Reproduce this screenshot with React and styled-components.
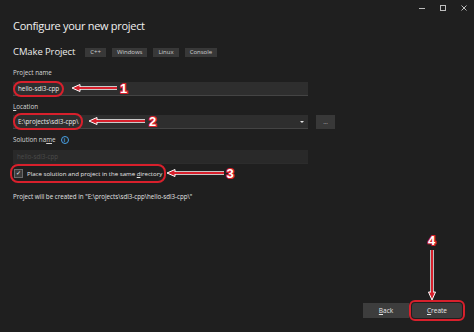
import React from 'react';
import styled, { createGlobalStyle } from 'styled-components';

const GlobalStyle = createGlobalStyle`
  html, body {
    margin: 0;
    padding: 0;
    background: #1f1f1f;
  }
  body {
    font-family: "Open Sans", "Noto Sans", sans-serif;
    color: #e6e6e6;
  }
`;

const red = '#d8202c';

export const StyledWindow = styled.div`
  position: relative;
  width: 474px;
  height: 332px;
  background: #1f1f1f;
  overflow: hidden;
  display: flex;
  flex-direction: column;
`;

export const StyledTitleBar = styled.div`
  height: 15px;
  display: flex;
  justify-content: flex-end;
  align-items: center;
`;

export const StyledControl = styled.div`
  width: 21px;
  height: 15px;
  display: flex;
  align-items: center;
  justify-content: center;
  color: #bdbdbd;
`;

export const StyledBody = styled.div`
  flex: 1;
  padding: 0 0 0 13px;
  display: flex;
  flex-direction: column;
`;

export const StyledTitle = styled.h1`
  margin: 3px 0 0;
  font-size: 11px;
  font-weight: 400;
  line-height: 16px;
  color: #f0f0f0;
  letter-spacing: -0.3px;
`;

export const StyledTypeRow = styled.div`
  margin-top: 11px;
  display: flex;
  align-items: center;
  gap: 6px;
`;

export const StyledTypeName = styled.span`
  font-size: 9.5px;
  line-height: 14px;
  margin-right: 4px;
  color: #ececec;
  letter-spacing: -0.1px;
`;

export const StyledTag = styled.span`
  background: #383838;
  color: #cfcfcf;
  font-size: 6px;
  line-height: 9px;
  padding: 0 5px;
`;

export const StyledLabel = styled.div`
  margin-top: ${(p) => p.$top}px;
  font-size: 6.3px;
  line-height: 10px;
  color: #d6d6d6;
  display: flex;
  align-items: center;
  gap: 5px;
`;

export const StyledFieldRow = styled.div`
  margin-top: ${(p) => p.$top}px;
  display: flex;
  align-items: center;
  gap: 8px;
`;

export const StyledInput = styled.div`
  width: 295px;
  height: 14px;
  box-sizing: border-box;
  background: ${(p) => (p.$disabled ? '#292929' : '#2e2e2e')};
  border-bottom: 1px solid ${(p) => (p.$disabled ? '#2c2c2c' : '#444')};
  display: flex;
  align-items: center;
  justify-content: space-between;
  padding-right: 4px;
  font-size: 6.3px;
  color: ${(p) => (p.$disabled ? '#4a4a4a' : '#e8e8e8')};
`;

export const StyledPlain = styled.span`
  padding-left: 4px;
`;

export const StyledHighlight = styled.span`
  display: inline-flex;
  align-items: center;
  gap: 4px;
  height: ${(p) => p.$height || 16}px;
  box-sizing: border-box;
  padding: 0 ${(p) => p.$pad || 3}px;
  margin-left: ${(p) => p.$shift || 0}px;
  border: 2px solid ${red};
  border-radius: 8px;
`;

export const StyledCaret = styled.span`
  width: 0;
  height: 0;
  border-left: 2px solid transparent;
  border-right: 2px solid transparent;
  border-top: 2px solid #e6e6e6;
`;

export const StyledBrowse = styled.div`
  width: 19px;
  height: 14px;
  background: #383838;
  display: flex;
  align-items: center;
  justify-content: center;
  color: #d8d8d8;
  font-size: 6px;
  line-height: 1;
`;

export const StyledInfo = styled.span`
  width: 6px;
  height: 6px;
  border: 1px solid #4aa3e8;
  border-radius: 50%;
  color: #4aa3e8;
  font-size: 5px;
  font-weight: 700;
  display: inline-flex;
  align-items: center;
  justify-content: center;
  line-height: 1;
`;

export const StyledCheckRow = styled.div`
  margin-top: 0;
  display: flex;
`;

export const StyledCheckbox = styled.span`
  width: 7px;
  height: 7px;
  background: #3b3b3b;
  border: 1px solid #6a6a6a;
  color: #f0f0f0;
  font-size: 6px;
  line-height: 7px;
  text-align: center;
`;

export const StyledCheckText = styled.span`
  font-size: 6.1px;
  color: #e8e8e8;
`;

export const StyledNote = styled.div`
  margin-top: 9px;
  font-size: 6.2px;
  line-height: 10px;
  color: #e2e2e2;
`;

export const StyledFooter = styled.div`
  margin-top: auto;
  padding: 0 12px 14px 0;
  display: flex;
  justify-content: flex-end;
  gap: 3px;
`;

export const StyledButton = styled.div`
  width: ${(p) => p.$width}px;
  height: 15px;
  background: #3d3d3d;
  color: #e8e8e8;
  font-size: 6.5px;
  display: flex;
  align-items: center;
  justify-content: center;
  outline: ${(p) => (p.$marked ? `2px solid ${red}` : 'none')};
  outline-offset: 1px;
  border-radius: ${(p) => (p.$marked ? 3 : 0)}px;
`;

export const StyledOverlay = styled.svg`
  position: absolute;
  inset: 0;
  pointer-events: none;
`;

const Arrow = ({ x1, y1, x2, y2 }) => {
  const dx = x2 - x1;
  const dy = y2 - y1;
  const len = Math.hypot(dx, dy);
  const ux = dx / len;
  const uy = dy / len;
  const bx = x2 - ux * 8;
  const by = y2 - uy * 8;
  const px = -uy * 3.5;
  const py = ux * 3.5;
  const head = `${x2},${y2} ${bx + px},${by + py} ${bx - px},${by - py}`;
  return (
    <g>
      <line x1={x1} y1={y1} x2={bx} y2={by} stroke="#fff" strokeWidth="3.4" />
      <polygon points={head} fill={red} stroke="#fff" strokeWidth="1" />
      <line x1={x1} y1={y1} x2={bx + ux} y2={by + uy} stroke={red} strokeWidth="2" />
    </g>
  );
};

const Num = ({ x, y, children }) => (
  <text
    x={x}
    y={y}
    fill="#fff"
    stroke={red}
    strokeWidth="2.2"
    paintOrder="stroke"
    fontFamily="'Liberation Sans', Arial, sans-serif"
    fontWeight="700"
    fontSize="13"
    textAnchor="middle"
  >
    {children}
  </text>
);

const App = () => (
  <>
    <GlobalStyle />
    <StyledWindow>
      <StyledTitleBar>
        <StyledControl>
          <svg width="8" height="8" viewBox="0 0 8 8">
            <line x1="1" y1="4.5" x2="7" y2="4.5" stroke="currentColor" strokeWidth="1" />
          </svg>
        </StyledControl>
        <StyledControl>
          <svg width="8" height="8" viewBox="0 0 8 8">
            <rect x="1.5" y="1.5" width="5" height="5" fill="none" stroke="currentColor" strokeWidth="1" />
          </svg>
        </StyledControl>
        <StyledControl>
          <svg width="8" height="8" viewBox="0 0 8 8">
            <path d="M1.5 1.5 L6.5 6.5 M6.5 1.5 L1.5 6.5" stroke="currentColor" strokeWidth="1" />
          </svg>
        </StyledControl>
      </StyledTitleBar>
      <StyledBody>
        <StyledTitle>Configure your new project</StyledTitle>
        <StyledTypeRow>
          <StyledTypeName>CMake Project</StyledTypeName>
          <StyledTag>C++</StyledTag>
          <StyledTag>Windows</StyledTag>
          <StyledTag>Linux</StyledTag>
          <StyledTag>Console</StyledTag>
        </StyledTypeRow>

        <StyledLabel $top={9}>Project name</StyledLabel>
        <StyledFieldRow $top={4}>
          <StyledInput>
            <StyledHighlight>hello-sdl3-cpp</StyledHighlight>
          </StyledInput>
        </StyledFieldRow>

        <StyledLabel $top={6}>
          <span>
            <u>L</u>ocation
          </span>
        </StyledLabel>
        <StyledFieldRow $top={3}>
          <StyledInput>
            <StyledHighlight $height={17}>E:\projects\sdl3-cpp\</StyledHighlight>
            <StyledCaret />
          </StyledInput>
          <StyledBrowse>...</StyledBrowse>
        </StyledFieldRow>

        <StyledLabel $top={6}>
          <span>
            Solution na<u>m</u>e
          </span>
          <StyledInfo>i</StyledInfo>
        </StyledLabel>
        <StyledFieldRow $top={5}>
          <StyledInput $disabled>
            <StyledPlain>hello-sdl3-cpp</StyledPlain>
          </StyledInput>
        </StyledFieldRow>

        <StyledCheckRow>
          <StyledHighlight $height={19} $pad={2} $shift={-3}>
            <StyledCheckbox>✓</StyledCheckbox>
            <StyledCheckText>
              Place solution and project in the same <u>d</u>irectory
            </StyledCheckText>
          </StyledHighlight>
        </StyledCheckRow>

        <StyledNote>Project will be created in "E:\projects\sdl3-cpp\hello-sdl3-cpp\"</StyledNote>

        <StyledFooter>
          <StyledButton $width={46}>
            <span>
              <u>B</u>ack
            </span>
          </StyledButton>
          <StyledButton $width={50} $marked>
            <span>
              <u>C</u>reate
            </span>
          </StyledButton>
        </StyledFooter>
      </StyledBody>

      <StyledOverlay width="474" height="332" viewBox="0 0 474 332">
        <Arrow x1={117} y1={88} x2={72} y2={88} />
        <Num x={123.5} y={93}>1</Num>
        <Arrow x1={145} y1={121} x2={89} y2={121} />
        <Num x={152.5} y={126}>2</Num>
        <Arrow x1={224} y1={173} x2={167} y2={173} />
        <Num x={230} y={178}>3</Num>
        <Arrow x1={432} y1={250} x2={432} y2={300} />
        <Num x={431.5} y={245}>4</Num>
      </StyledOverlay>
    </StyledWindow>
  </>
);

export default App;
